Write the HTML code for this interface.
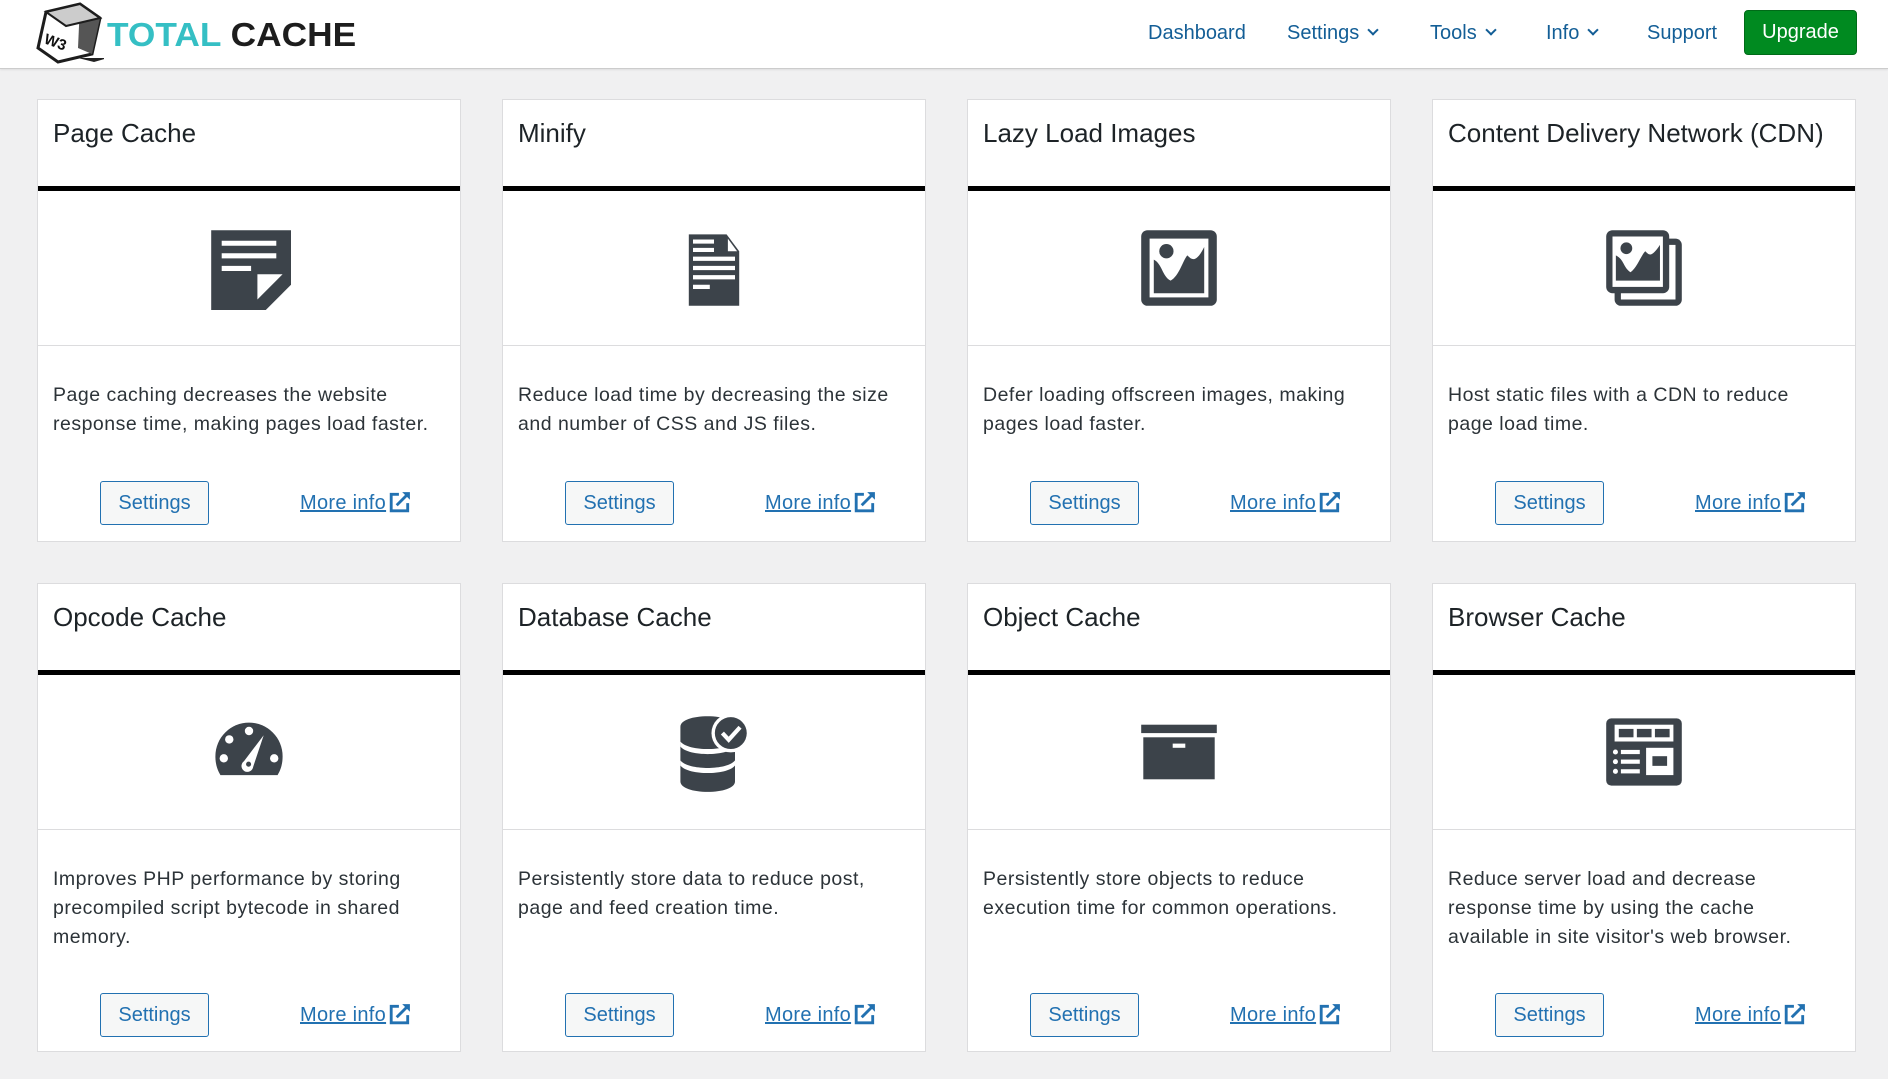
<!DOCTYPE html>
<html><head><meta charset="utf-8"><style>
*{box-sizing:border-box;margin:0;padding:0}
body{width:1888px;height:1079px;background:#f0f0f1;font-family:"Liberation Sans",sans-serif;position:relative;overflow:hidden;color:#1d2327}
.hdr{position:absolute;left:0;top:0;width:1888px;height:69px;background:#fff;border-bottom:1px solid #ccc;box-shadow:0 1px 2px rgba(0,0,0,.08)}
.nav{position:absolute;top:22px;font-size:20px;color:#135e96}
.chev{display:inline-block;width:8px;height:8px;border-right:2px solid #135e96;border-bottom:2px solid #135e96;transform:rotate(45deg);margin-left:10px;position:relative;top:-5px}
.up{position:absolute;left:1744px;top:10px;width:113px;height:45px;background:#008a20;border:1px solid #006b18;border-radius:4px;color:#fff;font-size:20px;text-align:center;line-height:43px}
.card{position:absolute;width:424px;background:#fff;border:1px solid #dcdcde}
.card h2{font-weight:normal;font-size:26px;height:91px;padding:18px 0 0 15px;border-bottom:5px solid #000;color:#1d2327}
.ic{height:155px;border-bottom:1px solid #dcdcde;display:flex;align-items:center;justify-content:center}
.ic svg{width:84px;height:84px}
.d{padding:35px 15px 0 15px;font-size:19.5px;letter-spacing:.5px;line-height:29px;color:#2c3338}
.btn{position:absolute;left:62px;width:109px;height:44px;border:1px solid #2271b1;border-radius:3px;background:#f6f7f7;color:#2271b1;font-size:20px;text-align:center;line-height:42px}
.mi{position:absolute;left:262px;color:#2271b1;font-size:20px;letter-spacing:.3px;text-decoration:underline}
.mi svg{width:22px;height:22px;vertical-align:-4px;margin-left:3px}
.r1{top:99px;height:443px}.r2{top:583px;height:469px}
.r1 .btn{top:381px}.r1 .mi{top:391px}
.r2 .btn{top:409px}.r2 .mi{top:419px}
</style></head><body>
<div class="hdr">
<svg style="position:absolute;left:34px;top:2px" width="70" height="62" viewBox="0 0 70 62"><path d="M12 10 L46 2 L66 16 L58 52 L24 60 L4 46 Z" fill="#fff" stroke="#1d1d1d" stroke-width="3"/><path d="M46 2 L66 16 L58 52 L44 46 Z" fill="#555"/><path d="M12 10 L46 2 L66 16 L32 24 Z" fill="#ccc" stroke="#1d1d1d" stroke-width="2"/><text x="10" y="44" font-size="15" font-weight="bold" fill="#111" font-family="Liberation Sans" transform="rotate(20 18 40)">W3</text><path d="M44 56 L74 56 L60 60Z" fill="#222"/></svg>
<div style="position:absolute;left:107px;top:16px;font-size:33px;font-weight:bold;letter-spacing:0;transform:scaleX(1.07);transform-origin:left;font-family:'Liberation Sans',sans-serif;white-space:nowrap"><span style="color:#35bfc4">TOTAL</span> <span style="color:#1d1d1d">CACHE</span></div>
<span class="nav" style="left:1148px">Dashboard</span>
<span class="nav" style="left:1287px">Settings<i class="chev"></i></span>
<span class="nav" style="left:1430px">Tools<i class="chev"></i></span>
<span class="nav" style="left:1546px">Info<i class="chev"></i></span>
<span class="nav" style="left:1647px">Support</span>
<div class="up">Upgrade</div>
</div>

<!-- Row 1 -->
<div class="card r1" style="left:37px"><h2>Page Cache</h2><div class="ic"><svg viewBox="0 0 20 20"><path d="M1 1h19v13l-6 6H1z" fill="#3c434a"/><path d="M3.5 3.5h13v1.2h-13zM3.5 6.5h13v1.2h-13zM3.5 9.5h7v1.2h-7z" fill="#fff"/><path d="M12 11.5h6l-6 6z" fill="#fff"/></svg></div><div class="d">Page caching decreases the website response time, making pages load faster.</div><div class="btn">Settings</div><div class="mi">More info<svg viewBox="0 0 20 20"><path d="M9 3H2v15h15v-7" fill="none" stroke="#2271b1" stroke-width="2.6"/><path d="M12 1h7v7z" fill="#2271b1"/><path d="M7 13L17 3" stroke="#2271b1" stroke-width="2.6"/></svg></div></div>
<div class="card r1" style="left:502px"><h2>Minify</h2><div class="ic"><svg viewBox="0 0 20 20"><path d="M4 2h9l3 4v13H4z" fill="#3c434a"/><path d="M5 3.2h5v1h-5zM5 5.2h5v1h-5zM5 7.3h10v1H5zM5 9.5h10v1H5zM5 11.7h10v1H5zM5 14h4v1H5z" fill="#fff"/><path d="M13.3 3v3h2.2z" fill="#fff"/></svg></div><div class="d">Reduce load time by decreasing the size and number of CSS and JS files.</div><div class="btn">Settings</div><div class="mi">More info<svg viewBox="0 0 20 20"><path d="M9 3H2v15h15v-7" fill="none" stroke="#2271b1" stroke-width="2.6"/><path d="M12 1h7v7z" fill="#2271b1"/><path d="M7 13L17 3" stroke="#2271b1" stroke-width="2.6"/></svg></div></div>
<div class="card r1" style="left:967px"><h2>Lazy Load Images</h2><div class="ic"><svg viewBox="0 0 20 20"><rect x="1" y="1" width="18" height="18" rx="1.5" fill="#3c434a"/><rect x="3" y="3" width="14" height="14" fill="#fff"/><path d="M4 8c2 1 2 4 4 5 2-1 3-5 4-6 1 1 2 2 4-2v11H4z" fill="#3c434a"/><circle cx="7" cy="6" r="1.7" fill="#3c434a"/></svg></div><div class="d">Defer loading offscreen images, making pages load faster.</div><div class="btn">Settings</div><div class="mi">More info<svg viewBox="0 0 20 20"><path d="M9 3H2v15h15v-7" fill="none" stroke="#2271b1" stroke-width="2.6"/><path d="M12 1h7v7z" fill="#2271b1"/><path d="M7 13L17 3" stroke="#2271b1" stroke-width="2.6"/></svg></div></div>
<div class="card r1" style="left:1432px"><h2>Content Delivery Network (CDN)</h2><div class="ic"><svg viewBox="0 0 20 20"><rect x="3" y="3" width="16" height="16" rx="1.5" fill="#3c434a"/><rect x="4.5" y="4.5" width="13" height="13" fill="#fff"/><rect x="1" y="1" width="15" height="15" rx="1.5" fill="#3c434a"/><rect x="2.5" y="2.5" width="12" height="12" fill="#fff"/><path d="M3.3 7c2 1 1.8 3 3.5 4 1.5-1 2.5-4 3.5-5 1 1 1.5 1.5 3.5-1.5v8.5H3.3z" fill="#3c434a"/><circle cx="5.8" cy="5.3" r="1.4" fill="#3c434a"/></svg></div><div class="d">Host static files with a CDN to reduce page load time.</div><div class="btn">Settings</div><div class="mi">More info<svg viewBox="0 0 20 20"><path d="M9 3H2v15h15v-7" fill="none" stroke="#2271b1" stroke-width="2.6"/><path d="M12 1h7v7z" fill="#2271b1"/><path d="M7 13L17 3" stroke="#2271b1" stroke-width="2.6"/></svg></div></div>

<!-- Row 2 -->
<div class="card r2" style="left:37px"><h2>Opcode Cache</h2><div class="ic"><svg viewBox="0 0 20 20"><path d="M10 3a8 8 0 0 1 8 8c0 2-.5 3.3-1.2 4.5H3.2C2.5 14.3 2 13 2 11a8 8 0 0 1 8-8z" fill="#3c434a"/><circle cx="10" cy="5" r="1" fill="#fff"/><circle cx="5.3" cy="7" r="1" fill="#fff"/><circle cx="4" cy="11.5" r="1" fill="#fff"/><circle cx="16" cy="11.5" r="1" fill="#fff"/><path d="M13.5 6l-2.5 7.5a1.4 1.4 0 1 1-2.2-1.3z" fill="#fff"/><circle cx="9.9" cy="12.9" r=".6" fill="#3c434a"/></svg></div><div class="d">Improves PHP performance by storing precompiled script bytecode in shared memory.</div><div class="btn">Settings</div><div class="mi">More info<svg viewBox="0 0 20 20"><path d="M9 3H2v15h15v-7" fill="none" stroke="#2271b1" stroke-width="2.6"/><path d="M12 1h7v7z" fill="#2271b1"/><path d="M7 13L17 3" stroke="#2271b1" stroke-width="2.6"/></svg></div></div>
<div class="card r2" style="left:502px"><h2>Database Cache</h2><div class="ic"><svg viewBox="0 0 20 20"><path d="M2 4c0-1.6 3-2.5 6.5-2.5S15 2.4 15 4v13c0 1.6-3 2.5-6.5 2.5S2 18.6 2 17z" fill="#3c434a"/><path d="M2 7.5c1 1.3 4 1.8 6.5 1.8s5.5-.5 6.5-1.8v1.2c-1 1.3-4 1.8-6.5 1.8S3 10 2 8.7zM2 12c1 1.3 4 1.8 6.5 1.8s5.5-.5 6.5-1.8v1.2c-1 1.3-4 1.8-6.5 1.8S3 14.5 2 13.2z" fill="#fff"/><circle cx="14" cy="5.5" r="4.6" fill="#fff"/><circle cx="14" cy="5.5" r="3.8" fill="#3c434a"/><path d="M12 5.5l1.5 1.6 2.7-3" stroke="#fff" stroke-width="1" fill="none"/></svg></div><div class="d">Persistently store data to reduce post, page and feed creation time.</div><div class="btn">Settings</div><div class="mi">More info<svg viewBox="0 0 20 20"><path d="M9 3H2v15h15v-7" fill="none" stroke="#2271b1" stroke-width="2.6"/><path d="M12 1h7v7z" fill="#2271b1"/><path d="M7 13L17 3" stroke="#2271b1" stroke-width="2.6"/></svg></div></div>
<div class="card r2" style="left:967px"><h2>Object Cache</h2><div class="ic"><svg viewBox="0 0 20 20"><rect x="1" y="3.5" width="18" height="2" fill="#3c434a"/><rect x="1.5" y="6.5" width="17" height="10" fill="#3c434a"/><rect x="8.5" y="8" width="3" height="1" fill="#fff"/></svg></div><div class="d">Persistently store objects to reduce execution time for common operations.</div><div class="btn">Settings</div><div class="mi">More info<svg viewBox="0 0 20 20"><path d="M9 3H2v15h15v-7" fill="none" stroke="#2271b1" stroke-width="2.6"/><path d="M12 1h7v7z" fill="#2271b1"/><path d="M7 13L17 3" stroke="#2271b1" stroke-width="2.6"/></svg></div></div>
<div class="card r2" style="left:1432px"><h2>Browser Cache</h2><div class="ic"><svg viewBox="0 0 20 20"><rect x="1" y="2" width="18" height="16" rx="1.2" fill="#3c434a"/><rect x="3" y="3.5" width="14" height="4" fill="#fff"/><rect x="4" y="4.5" width="3.5" height="2" fill="#3c434a"/><rect x="8.3" y="4.5" width="3.5" height="2" fill="#3c434a"/><rect x="12.6" y="4.5" width="3.5" height="2" fill="#3c434a"/><circle cx="3.2" cy="10" r=".6" fill="#fff"/><circle cx="3.2" cy="12.3" r=".6" fill="#fff"/><circle cx="3.2" cy="14.6" r=".6" fill="#fff"/><rect x="4.5" y="9.5" width="4.5" height="1" fill="#fff"/><rect x="4.5" y="11.8" width="4.5" height="1" fill="#fff"/><rect x="4.5" y="14.1" width="4.5" height="1" fill="#fff"/><rect x="10.5" y="9" width="6.5" height="6.5" fill="#fff"/><rect x="12" y="11" width="3.5" height="2.3" fill="#3c434a"/></svg></div><div class="d">Reduce server load and decrease response time by using the cache available in site visitor's web browser.</div><div class="btn">Settings</div><div class="mi">More info<svg viewBox="0 0 20 20"><path d="M9 3H2v15h15v-7" fill="none" stroke="#2271b1" stroke-width="2.6"/><path d="M12 1h7v7z" fill="#2271b1"/><path d="M7 13L17 3" stroke="#2271b1" stroke-width="2.6"/></svg></div></div>
</body></html>
